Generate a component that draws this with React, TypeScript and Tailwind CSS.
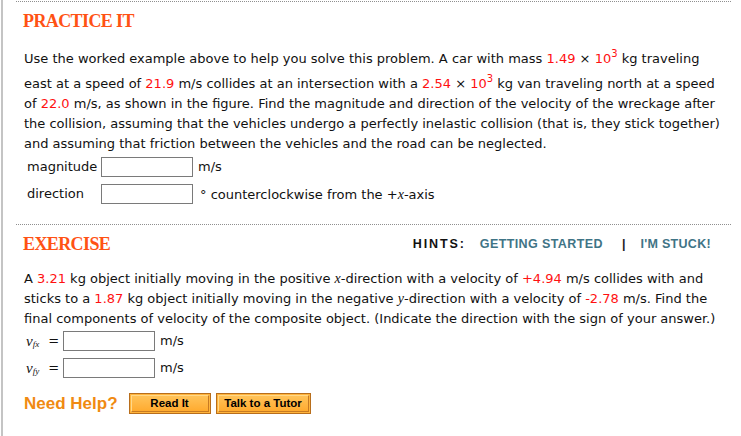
import React from "react";

const R = ({ children }: { children: React.ReactNode }) => (
  <span className="text-[#ff1111]">{children}</span>
);

const Var = ({ children }: { children: React.ReactNode }) => (
  <span className="font-['Liberation_Serif',serif] italic text-[14px]">{children}</span>
);

const Sup = ({ children }: { children: React.ReactNode }) => (
  <sup className="text-[10px] relative -top-[6px]">{children}</sup>
);

const Box = () => (
  <div className="w-[92px] h-[20px] border border-[#7a7a7a] bg-white shrink-0" />
);

const Btn = ({ children, w }: { children: React.ReactNode; w: string }) => (
  <div className={`${w} h-[21px] border border-[#b86e1c] bg-[#ffb43c] p-px flex`}>
    <div className="flex-1 border border-t-[#ffd88a] border-l-[#ffd88a] border-r-[#c77a22] border-b-[#c77a22] bg-gradient-to-b from-[#ffc257] to-[#ffab2e] flex items-center justify-center font-['Liberation_Sans',Arial,sans-serif] font-bold text-[11.5px] text-black leading-none">
      {children}
    </div>
  </div>
);

export default function App() {
  return (
    <div className="w-[741px] h-[436px] bg-white flex overflow-hidden">
      <div className="ml-px w-[2px] h-full bg-[#c4c4c4] shrink-0" />
      <div className="ml-[13px] w-[715px] font-['DejaVu_Sans','Verdana',sans-serif] text-[13px] text-[#111]">
        {/* PRACTICE IT */}
        <section className="mt-px border-t border-dotted border-[#8f8f8f]">
          <div className="pt-[8px] pl-[7px]">
            <h2 className="h-[22px] leading-[22px] font-['Liberation_Serif',serif] font-bold text-[18px] tracking-[-0.6px] text-[#ff5214]">
              PRACTICE IT
            </h2>
          </div>
          <div className="pl-[8px] mt-[17px] whitespace-nowrap">
            <div className="leading-[20px]">
              Use the worked example above to help you solve this problem. A car with mass <R>1.49</R> × <R>10</R>
              <Sup><R>3</R></Sup> kg traveling
            </div>
            <div className="leading-[20px] mt-[5px]">
              east at a speed of <R>21.9</R> m/s collides at an intersection with a <R>2.54</R> × <R>10</R>
              <Sup><R>3</R></Sup> kg van traveling north at a speed
            </div>
            <div className="leading-[20px]">
              of <R>22.0</R> m/s, as shown in the figure. Find the magnitude and direction of the velocity of the wreckage after
            </div>
            <div className="leading-[20px]">
              the collision, assuming that the vehicles undergo a perfectly inelastic collision (that is, they stick together)
            </div>
            <div className="leading-[20px]">
              and assuming that friction between the vehicles and the road can be neglected.
            </div>
            <div className="mt-[3px] flex items-center h-[20px]">
              <span className="w-[77px] pl-[3px]">magnitude</span>
              <Box />
              <span className="ml-[5px]">m/s</span>
            </div>
            <div className="mt-[7px] flex items-center h-[20px]">
              <span className="w-[77px] pl-[3px]">direction</span>
              <Box />
              <span className="ml-[7px]">
                ° counterclockwise from the +<Var>x</Var>-axis
              </span>
            </div>
          </div>
        </section>

        {/* EXERCISE */}
        <section className="mt-[20px] border-t border-dotted border-[#8f8f8f]">
          <div className="pt-[8px] pl-[7px] flex items-center justify-between">
            <h2 className="h-[22px] leading-[22px] font-['Liberation_Serif',serif] font-bold text-[18px] tracking-[-0.6px] text-[#ff5214]">
              EXERCISE
            </h2>
            <div className="flex items-center pr-[20px] font-['Liberation_Sans',Arial,sans-serif] font-bold text-[12.5px]">
              <span className="text-[#111] tracking-[1.9px]">HINTS:</span>
              <span className="ml-[14px] text-[#3f7486] tracking-[0.4px]">GETTING STARTED</span>
              <span className="ml-[19px] text-[#222]">|</span>
              <span className="ml-[15px] text-[#3f7486] tracking-[0.3px]">I'M STUCK!</span>
            </div>
          </div>
          <div className="pl-[8px] mt-[14px] whitespace-nowrap">
            <div className="leading-[20px]">
              A <R>3.21</R> kg object initially moving in the positive <Var>x</Var>-direction with a velocity of <R>+4.94</R> m/s collides with and
            </div>
            <div className="leading-[20px]">
              sticks to a <R>1.87</R> kg object initially moving in the negative <Var>y</Var>-direction with a velocity of <R>-2.78</R> m/s. Find the
            </div>
            <div className="leading-[20px]">
              final components of velocity of the composite object. (Indicate the direction with the sign of your answer.)
            </div>
            <div className="mt-[2px] flex items-center h-[20px]">
              <span className="w-[39px] pl-[2px] flex items-center">
                <span className="font-['Liberation_Serif',serif] italic text-[15px]">v</span>
                <span className="font-['Liberation_Serif',serif] italic text-[9px] mt-[7px]">fx</span>
                <span className="ml-[9px]">=</span>
              </span>
              <Box />
              <span className="ml-[5px]">m/s</span>
            </div>
            <div className="mt-[7px] flex items-center h-[20px]">
              <span className="w-[39px] pl-[2px] flex items-center">
                <span className="font-['Liberation_Serif',serif] italic text-[15px]">v</span>
                <span className="font-['Liberation_Serif',serif] italic text-[9px] mt-[7px]">fy</span>
                <span className="ml-[9px]">=</span>
              </span>
              <Box />
              <span className="ml-[5px]">m/s</span>
            </div>
            <div className="mt-[15px] flex items-center">
              <span className="font-['Liberation_Sans',Arial,sans-serif] font-bold text-[17px] text-[#f08a12] leading-[21px]">
                Need Help?
              </span>
              <div className="ml-[11px]">
                <Btn w="w-[82px]">Read It</Btn>
              </div>
              <div className="ml-[5px]">
                <Btn w="w-[95px]">Talk to a Tutor</Btn>
              </div>
            </div>
          </div>
        </section>
      </div>
    </div>
  );
}
